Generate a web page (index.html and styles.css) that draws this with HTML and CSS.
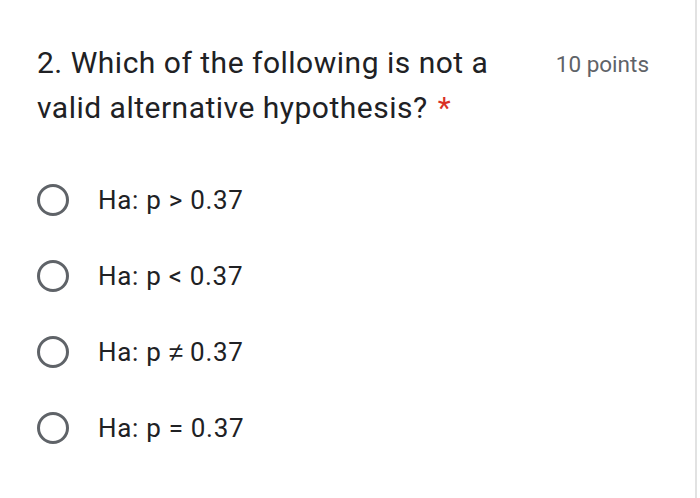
FILE: index.html
```html
<!DOCTYPE html>
<html>
<head>
<meta charset="utf-8">
<link rel="stylesheet" href="styles.css">
</head>
<body>
<div class="card">
  <div class="header">
    <div class="title">2. Which of the following is not a valid alternative hypothesis?<span class="req">*</span></div>
    <div class="points">10 points</div>
  </div>
  <div class="options">
    <div class="option"><span class="radio"></span><span class="label">Ha: p &gt; 0.37</span></div>
    <div class="option"><span class="radio"></span><span class="label">Ha: p &lt; 0.37</span></div>
    <div class="option"><span class="radio"></span><span class="label">Ha: p <span class="ne">≠</span> 0.37</span></div>
    <div class="option"><span class="radio"></span><span class="label">Ha: p = 0.37</span></div>
  </div>
</div>
</body>
</html>
```
FILE: styles.css
```css
html, body {
  margin: 0;
  padding: 0;
  background: #fff;
}
.card {
  width: 697px;
  height: 498px;
  box-sizing: border-box;
  border-right: 2px solid #e2e2e2;
  padding: 40px 0 0 37px;
  font-family: Roboto, "Noto Sans", sans-serif;
  color: #202124;
}
.header {
  display: flex;
  justify-content: space-between;
  align-items: flex-start;
}
.title {
  width: 480px;
  font-size: 30px;
  line-height: 45px;
  letter-spacing: 0.5px;
}
.req {
  display: inline-block;
  color: #d93025;
  margin-left: 10px;
  line-height: 30px;
}
.points {
  font-size: 22.5px;
  color: #5f6368;
  margin-top: 11px;
  margin-right: 46px;
}
.options {
  margin-top: 54px;
  display: flex;
  flex-direction: column;
  gap: 44px;
}
.option {
  display: flex;
  align-items: center;
  height: 32px;
}
.radio {
  width: 26px;
  height: 26px;
  border: 3.5px solid #5f6368;
  border-radius: 50%;
  flex: none;
}
.label {
  margin-left: 29px;
  font-size: 26px;
  letter-spacing: 0.7px;
}
.ne {
  font-family: "Liberation Sans", sans-serif;
  letter-spacing: 0;
}
```
